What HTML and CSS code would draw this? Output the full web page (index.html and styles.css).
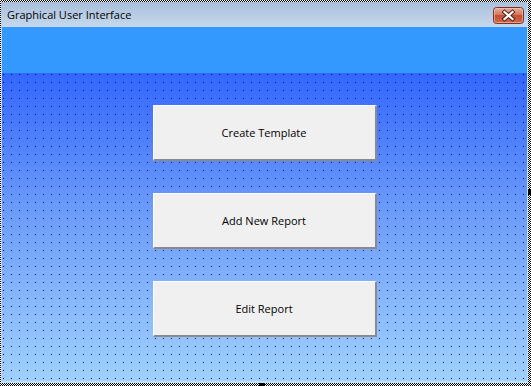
FILE: index.html
```html
<!DOCTYPE html>
<html lang="en">
<head>
    <meta charset="UTF-8">
    <meta name="viewport" content="width=device-width, initial-scale=1.0">
    <title>Graphical User Interface</title>
    <link rel="stylesheet" href="styles.css">
</head>
<body>
    <div class="designer">
        <div class="window">
            <div class="titlebar">
                <span class="title">Graphical User Interface</span>
                <svg class="close" width="31" height="17" viewBox="0 0 31 17">
                    <defs>
                        <linearGradient id="closeFill" x1="0" y1="0" x2="0" y2="1">
                            <stop offset="0" stop-color="#e8b0a2"/>
                            <stop offset="0.45" stop-color="#d5785f"/>
                            <stop offset="0.5" stop-color="#c24f33"/>
                            <stop offset="1" stop-color="#d06a4c"/>
                        </linearGradient>
                    </defs>
                    <rect x="0.5" y="0.5" width="30" height="16" rx="3" fill="url(#closeFill)" stroke="#7e3324"/>
                    <rect x="1.5" y="1.5" width="28" height="14" rx="2" fill="none" stroke="#f1c6b8" stroke-opacity="0.6"/>
                    <path d="M11.5 5 L19.5 12 M19.5 5 L11.5 12" stroke="#4a1a10" stroke-width="4" stroke-linecap="square"/>
                    <path d="M11.5 5 L19.5 12 M19.5 5 L11.5 12" stroke="#ffffff" stroke-width="2.2" stroke-linecap="square"/>
                </svg>
            </div>
            <div class="client">
                <div class="banner"></div>
                <div class="canvas">
                    <button class="cmd">Create Template</button>
                    <button class="cmd">Add New Report</button>
                    <button class="cmd">Edit Report</button>
                </div>
            </div>
        </div>
        <span class="handle handle-right"></span>
        <span class="handle handle-bottom"></span>
    </div>
</body>
</html>
```

FILE: styles.css
```css
body {
    margin: 0;
    width: 531px;
    height: 386px;
    overflow: hidden;
    background: #ffffff;
    font-family: "Open Sans", "Noto Sans", sans-serif;
}

.designer {
    position: relative;
    width: 531px;
    height: 386px;
    box-sizing: border-box;
    padding: 2px 3px 3px 1px;
    background: repeating-conic-gradient(#000 0 25%, #fff 0 50%) 0 0 / 2px 2px;
}

.window {
    height: 100%;
    display: flex;
    flex-direction: column;
    box-sizing: border-box;
    background: #c4d6eb;
    border-right: 1px solid #b8e4ff;
    border-bottom: 2px solid #b8e4ff;
}

.titlebar {
    height: 25px;
    flex-shrink: 0;
    display: flex;
    align-items: flex-start;
    justify-content: space-between;
    padding: 0 3px 0 6px;
    background: linear-gradient(#a9c0db, #c6d8ec);
}

.title {
    margin-top: 6px;
    font-size: 11px;
    line-height: 14px;
    color: #000;
}

.close {
    display: block;
    margin-top: 5px;
}

.client {
    flex: 1;
    display: flex;
    flex-direction: column;
    margin-left: 1px;
}

.banner {
    height: 46px;
    background: #3399ff;
}

.canvas {
    flex: 1;
    display: flex;
    flex-direction: column;
    align-items: center;
    gap: 32px;
    padding-top: 32px;
    background:
        conic-gradient(at 1px 1px, transparent 270deg, #000055 0) 1px 1px / 8px 8px,
        linear-gradient(#3366ff, #6c9cfb 45%, #9fd0ff);
}

.cmd {
    width: 224px;
    height: 56px;
    box-sizing: border-box;
    background: #f0f0f0;
    border-style: solid;
    border-width: 1px 2px 2px 1px;
    border-color: #ffffff #8a8a8a #8a8a8a #ffffff;
    font-family: "Open Sans", "Noto Sans", sans-serif;
    font-size: 11px;
    color: #000;
    padding: 0;
}

.handle {
    position: absolute;
    background: #000;
}

.handle-right {
    right: 0;
    top: 189px;
    width: 3px;
    height: 6px;
}

.handle-bottom {
    left: 259px;
    bottom: 0;
    width: 6px;
    height: 3px;
}
```
